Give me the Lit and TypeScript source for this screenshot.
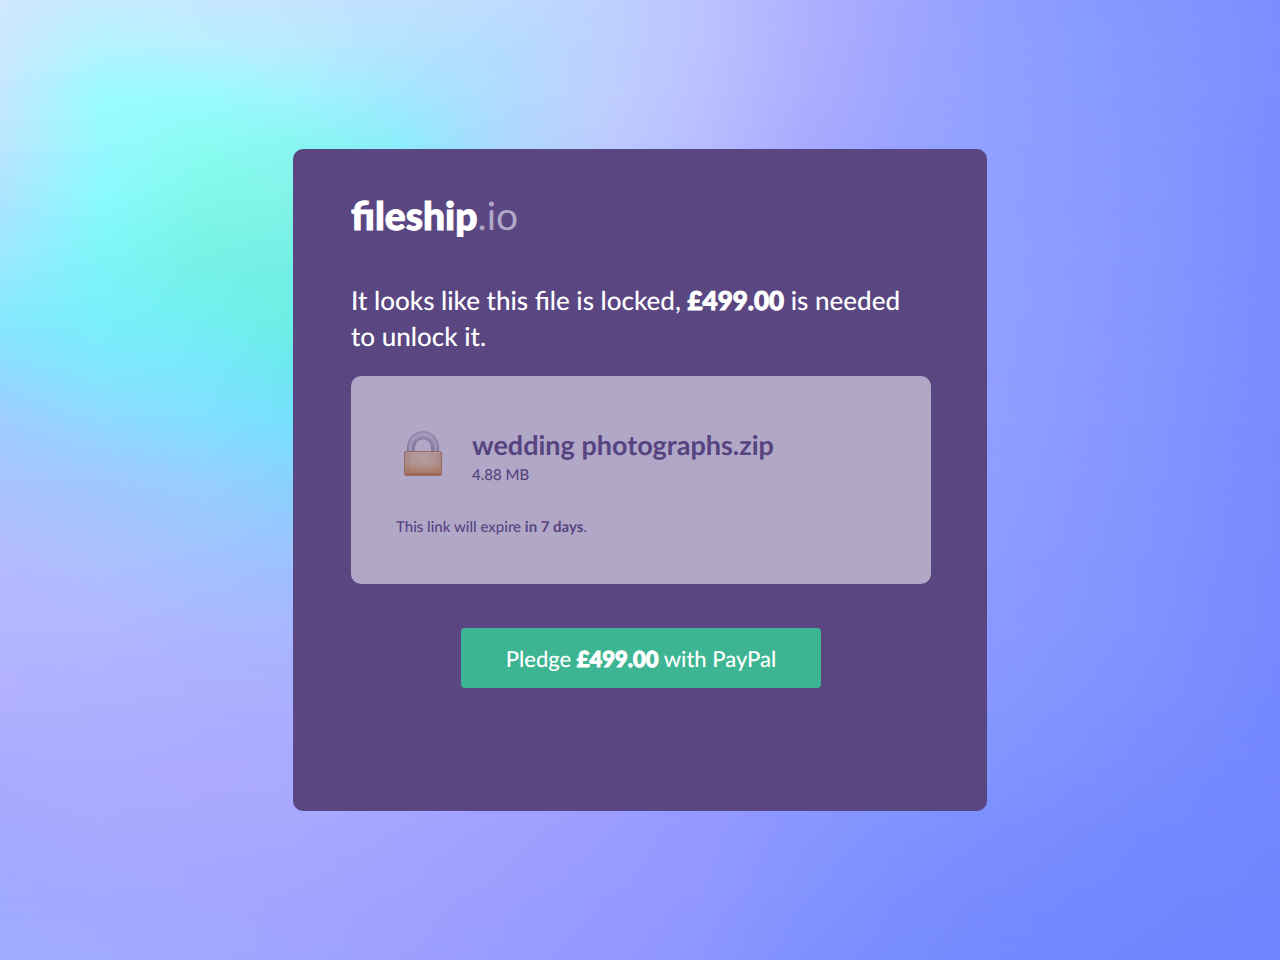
import { LitElement, html, css } from "lit";
import { customElement, property } from "lit/decorators.js";
import { styleMap } from "lit/directives/style-map.js";

// Colour mesh: one row of stops per height, blended into the next row.
const STOPS = [0, 8, 16, 23, 31, 39, 47, 55, 63, 70, 78, 89, 100];
const MESH: [number, string][] = [
  [0, "d0e8ff c4eaff c6e8ff c4e4ff c0e0ff bfdcff bed2ff bbc3ff afb0ff a1a7ff 909fff 8397ff 7c8eff"],
  [5, "cbe8ff b2f3ff b7efff b8ebff b4e4ff b4dcff bdd1ff bbc2ff afafff 9fa6ff 90a0ff 8498ff 7c8eff"],
  [10, "c4e7ff 9afcff 98faff a0f4ff a2e8ff b0dcff bfd0ff bac0ff adadff 9da6ff 90a0ff 8598ff 7b8eff"],
  [15, "bce6ff 96f9ff 8afcf2 88f6f2 8ceefa acd8ff bdccff b7bdff a9aaff 9aa4ff 90a0ff 8698ff 7a8cff"],
  [21, "ace4ff 88faff 80f7e8 82f3e8 8cecf2 a8d4ff b8c4ff b0b4ff a4a6ff 98a2ff 909fff 8698ff 7a8cff"],
  [27, "9ce8ff 7cf5f8 76f2e5 74f0e6 88e6f0 a8d0ff b0c0ff a8b0ff a0a8ff 98a0ff 919fff 8698ff 798cff"],
  [33, "86e8ff 78f0fa 72eff0 6cefe3 80e4f0 a4d0ff a8c0ff a0b0ff a0a8ff 98a0ff 919fff 8597ff 798cff"],
  [38, "8edcff 80e8ff 78e8fc 6ce8ee 78e0f8 a0ccff a8bcff a0b0ff a0a8ff 98a0ff 909eff 8597ff 798cff"],
  [44, "a0ccff 90d8ff 82dfff 76e0fe 80d8ff a0c8ff a8b8ff a0b0ff a0a8ff 98a0ff 909eff 8496ff 788bff"],
  [50, "a8c4ff a0c8ff 96cfff 88d2ff 90ccff a0c0ff a0b0ff a0a8ff 9ca4ff 949cff 8f9dff 8395ff 788bff"],
  [58, "b4bbff acc0ff a2c2ff 9cc2ff a0bcff a4b8ff a0b0ff 9ca8ff 98a0ff 9098ff 8c9bff 8194ff 778aff"],
  [66, "b4b5ff b2b6ff acb6ff a8b6ff a4b4ff a4b0ff a0a8ff 98a0ff 9098ff 8c96ff 8999ff 8093ff 7689ff"],
  [74, "b0b0ff aeafff acaeff aaaeff a8acff a4a8ff a0a0ff 989aff 9097ff 8896ff 8497ff 7c90ff 7488ff"],
  [80, "a9acff acacff acabff aaaaff a8a8ff a3a3ff 9da0ff 969aff 8b97ff 8395ff 8094ff 798dff 7387ff"],
  [86, "a4a9ff a8aaff a8a8ff a8a8ff a5a4ff a0a1ff 9b9dff 9499ff 8896ff 7f93ff 7b8fff 758aff 7286ff"],
  [93, "a0aaff a2a9ff a4a7ff a3a4ff a1a1ff 9c9eff 979aff 9198ff 8394ff 7b8fff 778bff 7288ff 7086ff"],
  [100, "a0acff a0aaff a0a7ff 9fa4ff 9d9fff 989cff 9498ff 8c96ff 7d90ff 788dff 7489ff 7086ff 6f84ff"],
];

@customElement("mesh-backdrop")
export class MeshBackdrop extends LitElement {
  static styles = css`
    :host { display: grid; overflow: hidden; }
    .band { grid-area: 1 / 1; }
  `;

  render() {
    return MESH.map(([at, row], i) => {
      const stops = row.split(" ").map((c, k) => `#${c} ${STOPS[k]}%`).join(", ");
      const from = i ? MESH[i - 1][0] : 0;
      const styles: Record<string, string> = { backgroundImage: `linear-gradient(to right, ${stops})` };
      if (i) styles.maskImage = `linear-gradient(to bottom, transparent ${from}%, #000 ${at}%)`;
      return html`<div class="band" style=${styleMap(styles)}></div>`;
    });
  }
}

@customElement("lock-icon")
export class LockIcon extends LitElement {
  static styles = css`
    :host { display: block; }
    .lock { display: block; width: 100%; height: auto; }
  `;

  render() {
    return html`
      <svg class="lock" viewBox="0 0 38 45" role="img" aria-label="Locked">
        <defs>
          <linearGradient id="body" x1="0" y1="0" x2="0" y2="1">
            <stop offset="0" stop-color="#a78d98" />
            <stop offset="0.45" stop-color="#ad8d88" />
            <stop offset="1" stop-color="#a9765f" />
          </linearGradient>
          <radialGradient id="glow" cx="0.5" cy="0.3" r="0.6">
            <stop offset="0" stop-color="#b9a2a4" stop-opacity="0.8" />
            <stop offset="1" stop-color="#b9a2a4" stop-opacity="0" />
          </radialGradient>
          <linearGradient id="steel" x1="0" y1="0" x2="0" y2="1">
            <stop offset="0" stop-color="#9c94b3" />
            <stop offset="1" stop-color="#8a80a4" />
          </linearGradient>
        </defs>
        <path d="M7 21.5V16.2a12 12 0 0 1 24 0V21.5" fill="none" stroke="#8278a0" stroke-width="8" />
        <path d="M7 21.5V16.2a12 12 0 0 1 24 0V21.5" fill="none" stroke="url(#steel)" stroke-width="6.6" />
        <path d="M6.4 21V16.2a12.6 12.6 0 0 1 25.2 0V21" fill="none" stroke="#aaa2bf" stroke-width="1.6" opacity="0.8" />
        <path d="M9.4 21V16.4a9.6 9.6 0 0 1 19.2 0V21" fill="none" stroke="#756b92" stroke-width="1.2" opacity="0.45" />
        <rect x="0.6" y="20.6" width="36.8" height="23.8" rx="2.2" fill="url(#body)" stroke="#986a64" stroke-width="1.2" />
        <rect x="1.5" y="21.5" width="35" height="22" rx="1.5" fill="url(#glow)" />
        <path d="M2 21.6H36" stroke="#b9a09f" stroke-width="0.8" />
        <path d="M4 22V43M34 22V43" stroke="#936959" stroke-width="0.8" opacity="0.4" />
        <path d="M1.5 43.2H36.5" stroke="#98594a" stroke-width="1.4" opacity="0.6" />
      </svg>
    `;
  }
}

@customElement("app-root")
export class AppRoot extends LitElement {
  @property() amount = "£499.00";
  @property() filename = "wedding photographs.zip";
  @property() size = "4.88 MB";

  static styles = css`
    :host {
      display: grid;
      min-height: 100vh;
      font-family: Lato, "Liberation Sans", sans-serif;
      text-rendering: geometricPrecision;
      color: #fff;
    }
    .backdrop { grid-area: 1 / 1; }
    .stage {
      grid-area: 1 / 1;
      z-index: 1;
      display: grid;
      place-items: center;
      padding: 24px;
    }
    .card {
      box-sizing: border-box;
      width: 100%;
      max-width: 694px;
      padding: 43px 56px 123px 58px;
      border-radius: 10px;
      background: #5a4782;
    }
    .brand {
      margin: 0 0 42px;
      font-size: 39px;
      line-height: 48px;
      font-weight: 900;
    }
    .strong { font-weight: 900; -webkit-text-stroke: 1px currentColor; }
    .brand-link { color: inherit; text-decoration: none; }
    .tld { font-weight: 400; color: #b1a8c8; }
    .message {
      margin: 0 0 22px;
      padding-right: 16px;
      font-size: 26px;
      line-height: 36px;
      font-weight: 500;
    }
    .file {
      padding: 51px 44px 45px 45px;
      border-radius: 10px;
      background: #b1a8c8;
      color: #57437f;
    }
    .row { display: flex; gap: 30px; padding-left: 8px; }
    .icon { width: 38px; margin-top: 4px; }
    .name {
      margin: 0;
      font-size: 27px;
      line-height: 36px;
      font-weight: 700;
    }
    .meta {
      margin: 0;
      font-size: 15px;
      line-height: 24px;
      font-weight: 500;
    }
    .expiry { margin-top: 28px; }
    .actions { display: flex; justify-content: center; margin-top: 44px; }
    .pledge {
      padding: 13px 45px 11px;
      border: 0;
      border-radius: 4px;
      background: #3db592;
      color: #fff;
      font: 500 22px/36px Lato, "Liberation Sans", sans-serif;
      text-rendering: inherit;
      cursor: pointer;
    }
  `;

  render() {
    return html`
      <mesh-backdrop class="backdrop"></mesh-backdrop>
      <main class="stage">
        <section class="card">
          <h1 class="brand"><a class="brand-link" href="#"><span class="strong">fileship</span><span class="tld">.io</span></a></h1>
          <p class="message">
            It looks like this file is locked, <strong class="strong">${this.amount}</strong> is needed to unlock it.
          </p>
          <div class="file">
            <div class="row">
              <lock-icon class="icon"></lock-icon>
              <div>
                <h2 class="name">${this.filename}</h2>
                <p class="meta">${this.size}</p>
              </div>
            </div>
            <p class="meta expiry">This link will expire <b>in 7 days</b>.</p>
          </div>
          <div class="actions">
            <button class="pledge" type="button">Pledge <strong class="strong">${this.amount}</strong> with PayPal</button>
          </div>
        </section>
      </main>
    `;
  }
}
